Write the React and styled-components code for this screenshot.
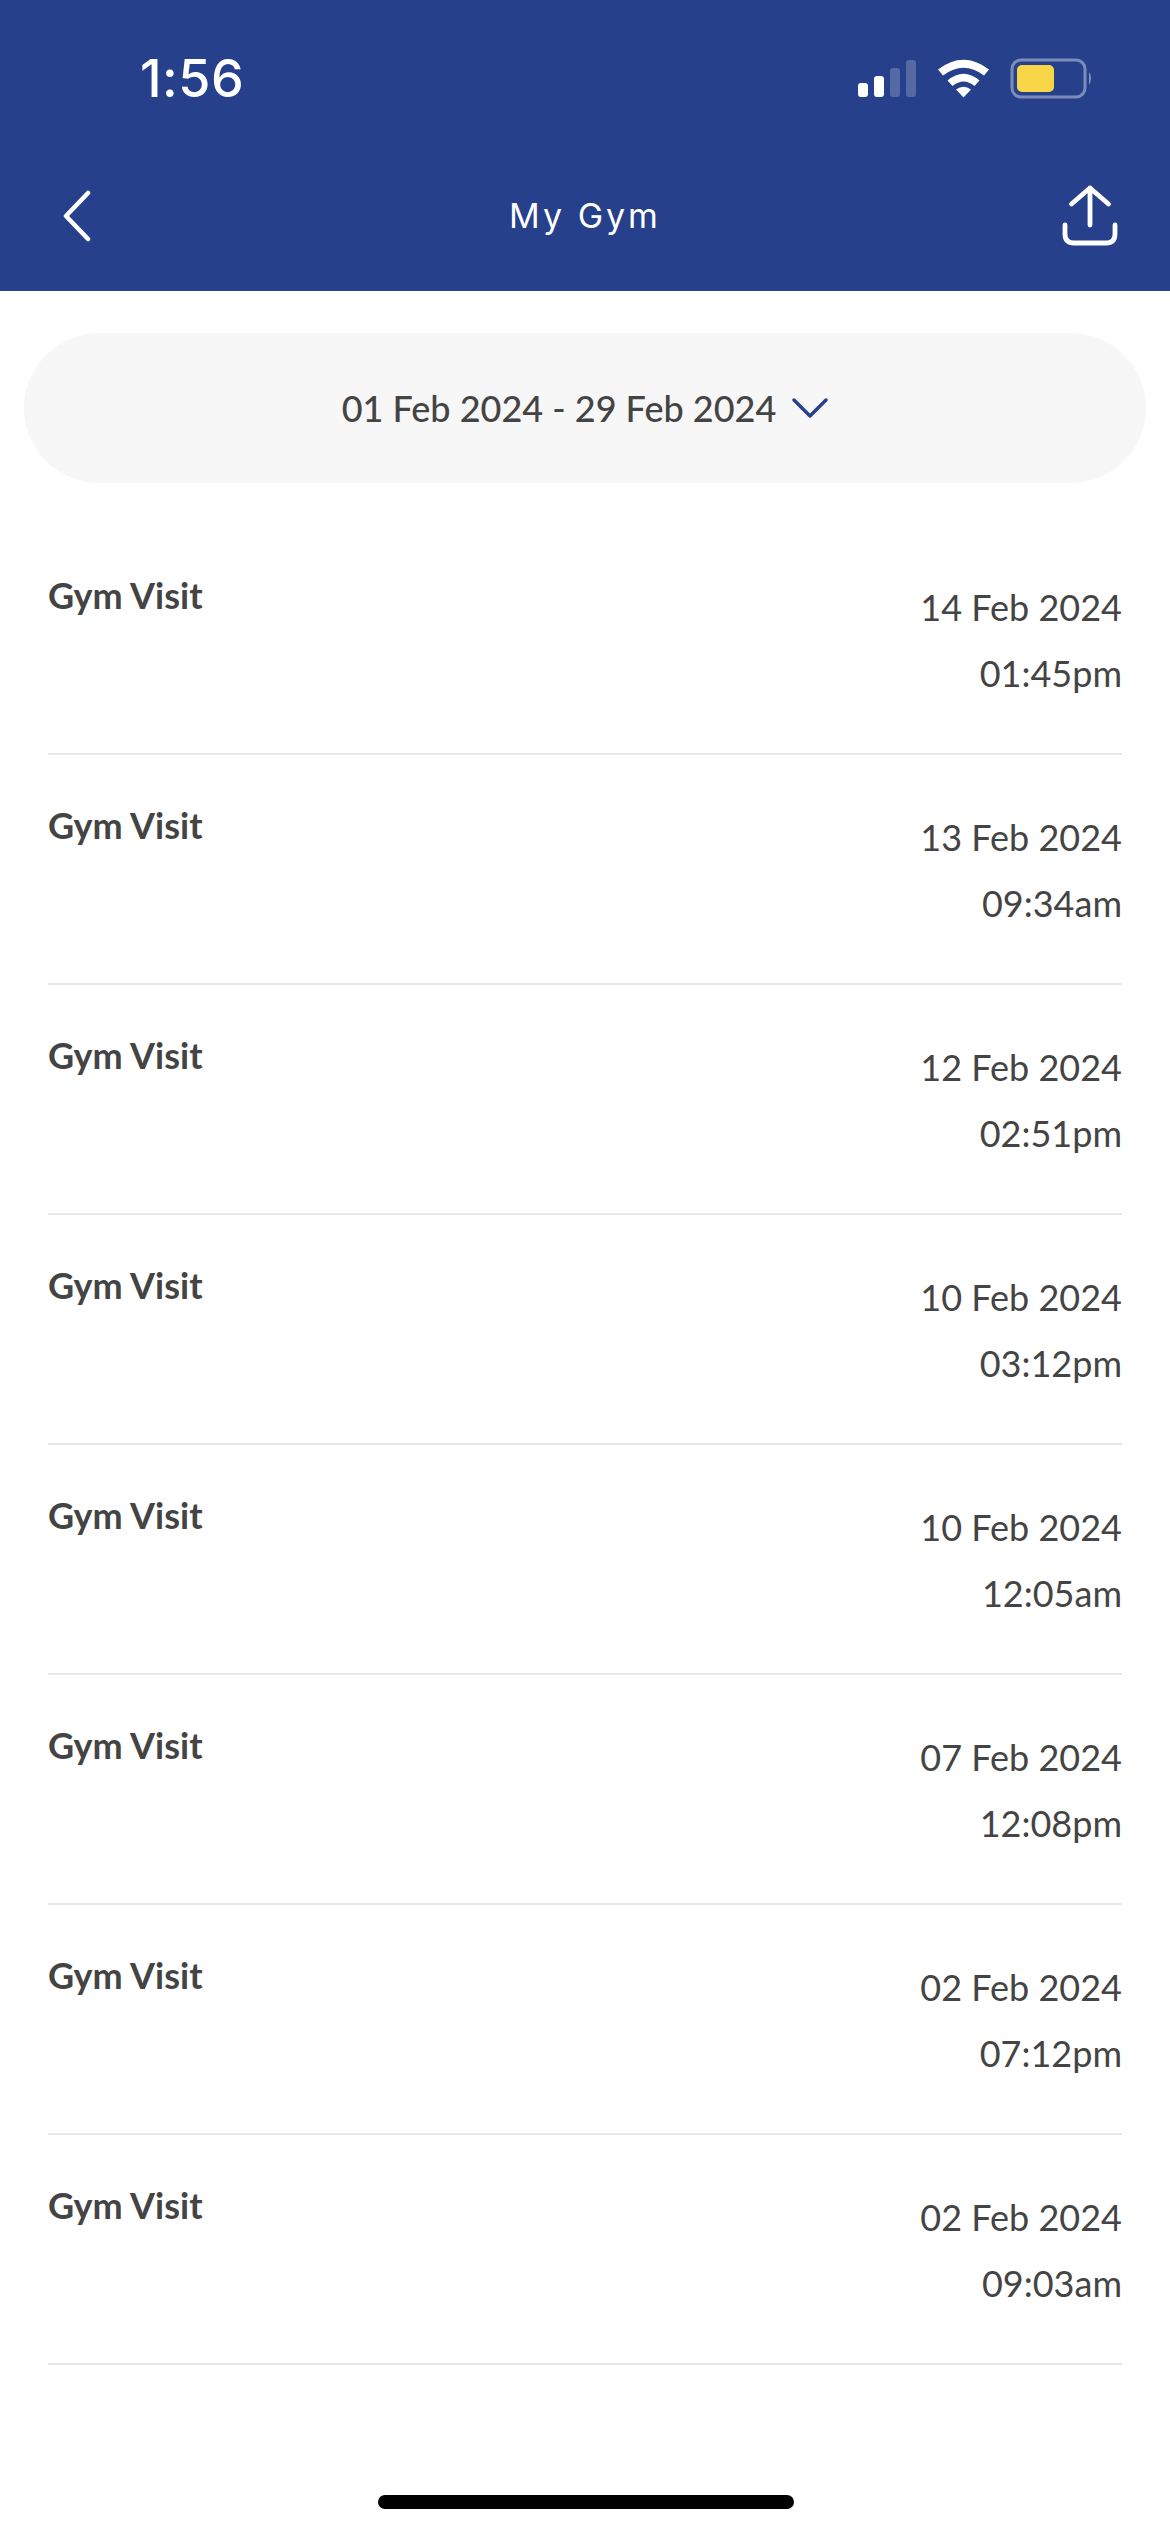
import React from "react";
import styled, { createGlobalStyle } from "styled-components";

const Global = createGlobalStyle`
  html, body { margin: 0; padding: 0; background: #fff; }
  * { box-sizing: border-box; }
  body { font-family: Lato, "Liberation Sans", sans-serif; }
`;

const Page = styled.div`
  position: relative;
  width: 1170px;
  height: 2532px;
  background: #fff;
  overflow: hidden;
`;

const Header = styled.header`
  height: 291px;
  background: #26408b;
  color: #fff;
  display: flex;
  flex-direction: column;
`;

const StatusBar = styled.div`
  height: 156px;
  display: flex;
  align-items: flex-start;
  justify-content: space-between;
  padding: 49px 72px 0 140px;
`;

const Clock = styled.div`
  font-family: Inter, sans-serif;
  font-weight: 500;
  font-size: 52px;
  line-height: 60px;
  letter-spacing: 0.5px;
`;

const StatusIcons = styled.div`
  padding-top: 8px;
  display: flex;
`;

const NavBar = styled.div`
  height: 135px;
  display: grid;
  grid-template-columns: 1fr auto 1fr;
  align-items: start;
  padding: 0 52px;
`;

const Title = styled.div`
  font-family: Inter, sans-serif;
  font-size: 34px;
  line-height: 46px;
  letter-spacing: 3px;
  margin-top: 37px;
`;

const BackIcon = styled.svg`
  margin: 32px 0 0 10px;
`;

const ShareIcon = styled.svg`
  margin-top: 28px;
  justify-self: end;
`;

const Content = styled.main`
  padding: 42px 24px 0;
`;

const Pill = styled.div`
  height: 150px;
  border-radius: 75px;
  background: #f7f7f7;
  display: flex;
  align-items: center;
  justify-content: center;
  gap: 16px;
  color: #444;
  font-size: 36px;
  font-weight: 500;
`;

const List = styled.div`
  padding: 42px 48px 0;
`;

const Row = styled.div`
  height: 230px;
  border-bottom: 2px solid #e6e8ea;
  display: flex;
  justify-content: space-between;
  align-items: flex-start;
  color: #444;
`;

const Label = styled.div`
  font-size: 36px;
  font-weight: 700;
  line-height: 44px;
  margin-top: 48px;
`;

const When = styled.div`
  text-align: right;
  font-size: 36px;
  line-height: 66px;
  margin-top: 49px;
`;

const HomeBar = styled.div`
  position: absolute;
  left: 378px;
  bottom: 23px;
  width: 416px;
  height: 14px;
  border-radius: 7px;
  background: #000;
`;

const visits = [
  ["14 Feb 2024", "01:45pm"],
  ["13 Feb 2024", "09:34am"],
  ["12 Feb 2024", "02:51pm"],
  ["10 Feb 2024", "03:12pm"],
  ["10 Feb 2024", "12:05am"],
  ["07 Feb 2024", "12:08pm"],
  ["02 Feb 2024", "07:12pm"],
  ["02 Feb 2024", "09:03am"],
];

const StatusGlyphs = () => (
  <svg width="240" height="42" viewBox="856 56 240 42">
    <rect x="856" y="82" width="10" height="14" rx="3" fill="#fff" />
    <rect x="872" y="75" width="10" height="21" rx="3" fill="#fff" />
    <rect x="888" y="67" width="10" height="29" rx="3" fill="#fff" opacity="0.22" />
    <rect x="904" y="59" width="10" height="37" rx="3" fill="#fff" opacity="0.22" />
    <path d="M936 68.5 Q961.5 49 987 68.5 L982 74.5 Q961.5 59 941 74.5 Z" fill="#fff" />
    <path d="M945.5 79.5 Q961.5 66 977.5 79.5 L972.5 85 Q961.5 76 950.5 85 Z" fill="#fff" />
    <path d="M954 88.5 Q961.5 83 969 88.5 L961.5 96.5 Z" fill="#fff" />
    <rect x="1010" y="59" width="73" height="37" rx="9" fill="none" stroke="#fff" strokeOpacity="0.4" strokeWidth="3" />
    <rect x="1015" y="64" width="37" height="27" rx="5" fill="#f8d648" />
    <path d="M1087 71 Q1091 77 1087 84 Z" fill="#fff" fillOpacity="0.45" />
  </svg>
);

export default function App() {
  return (
    <Page>
      <Global />
      <Header>
        <StatusBar>
          <Clock>1:56</Clock>
          <StatusIcons>
            <StatusGlyphs />
          </StatusIcons>
        </StatusBar>
        <NavBar>
          <BackIcon width="30" height="54" viewBox="0 0 30 54" fill="none" stroke="#fff" strokeWidth="4.5" strokeLinecap="round" strokeLinejoin="round">
            <path d="M26 5 L4 28 L26 51" />
          </BackIcon>
          <Title>My Gym</Title>
          <ShareIcon width="56" height="62" viewBox="0 0 56 62" fill="none" stroke="#fff" strokeWidth="4.8" strokeLinecap="round" strokeLinejoin="round">
            <path d="M28 41 V4 M9.5 20 L28 4 L46.5 20" />
            <path d="M3 41 V50 Q3 59 12 59 H44 Q53 59 53 50 V41" />
          </ShareIcon>
        </NavBar>
      </Header>
      <Content>
        <Pill>
          <span>01 Feb 2024 - 29 Feb 2024</span>
          <svg width="36" height="20" viewBox="0 0 36 20" fill="none" stroke="#26408b" strokeWidth="3.4" strokeLinecap="round" strokeLinejoin="round">
            <path d="M2 2 L18 18 L34 2" />
          </svg>
        </Pill>
      </Content>
      <List>
        {visits.map(([date, time], i) => (
          <Row key={i}>
            <Label>Gym Visit</Label>
            <When>
              <div>{date}</div>
              <div>{time}</div>
            </When>
          </Row>
        ))}
      </List>
      <HomeBar />
    </Page>
  );
}
